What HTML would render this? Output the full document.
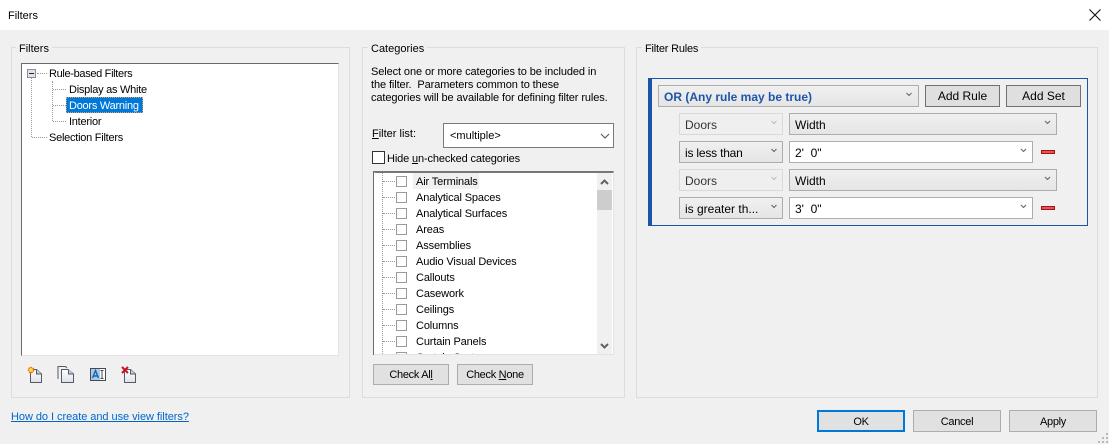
<!DOCTYPE html>
<html><head><meta charset="utf-8"><style>
html,body{margin:0;padding:0}
body{width:1109px;height:444px;position:relative;overflow:hidden;background:#f0f0f0;font:11px/18px "Liberation Sans",sans-serif;color:#000}
div,span.a,svg{position:absolute;box-sizing:border-box}
.t{white-space:nowrap;height:16px}
.g{border:1px solid #dcdcdc}
.l{background:#f0f0f0;padding:0 3px;white-space:nowrap;height:16px}
.b{background:#e1e1e1;border:1px solid #adadad;text-align:center;line-height:20px}
.r{font-size:12px}
.c{background:linear-gradient(#f0f0f0,#e5e5e5);border:1px solid #adadad;line-height:22px;padding-left:5px;white-space:nowrap;font-size:12px}
.w{background:#fff;border:1px solid #adadad;line-height:22px;padding-left:5px;white-space:pre;font-size:12px}
.dis{background:#efefef;border:1px solid #d9d9d9;line-height:22px;padding-left:5px;color:#333;font-size:12px}
.cb{width:11px;height:11px;background:#fff;border:1px solid #9a9a9a}
.dh{height:1px;border-top:1px dotted #999}
.dv{width:1px;border-left:1px dotted #999}
.tr{letter-spacing:-.25px}
.li{letter-spacing:-.13px}
.s{letter-spacing:-.3px;line-height:21px}
u{text-decoration:underline}
.m{width:14px;height:4px;background:#f05050;border:1px solid #a01818}
</style></head><body>
<div style="left:0;top:0;width:1109px;height:30px;background:#fff"></div>
<div class="t" style="left:8px;top:7px">Filters</div>
<svg style="left:1088px;top:8px" width="14" height="14"><path d="M1.500 1.500L12.500 12.500M12.500 1.500L1.500 12.500" stroke="#111" stroke-width="1.100"/></svg>

<div class="g" style="left:11px;top:47px;width:339px;height:351px"></div>
<div class="l" style="left:16px;top:40px">Filters</div>
<div style="left:21px;top:63px;width:318px;height:293px;background:#fff;border:1px solid #e3e3e3;border-top:1px solid #6a6a6a;border-left:1px solid #6a6a6a"></div>
<div style="left:27px;top:69px;width:9px;height:9px;background:#dfe3e8;border:1px solid #8a8f96"></div>
<div style="left:29px;top:73px;width:5px;height:1px;background:#222"></div>
<div class="dh" style="left:37px;top:73px;width:10px"></div>
<div class="dv" style="left:31px;top:78px;height:59px"></div>
<div class="dh" style="left:32px;top:137px;width:15px"></div>
<div class="dv" style="left:52px;top:81px;height:40px"></div>
<div class="dh" style="left:53px;top:89px;width:13px"></div>
<div class="dh" style="left:53px;top:105px;width:13px"></div>
<div class="dh" style="left:53px;top:121px;width:13px"></div>
<div class="t tr" style="left:49px;top:65px;letter-spacing:-.33px">Rule-based Filters</div>
<div class="t tr" style="left:69px;top:81px">Display as White</div>
<div class="t tr" style="left:66px;top:97px;width:77px;background:#0078d7;color:#fff;padding-left:3px;outline:1px dotted #d8a060;outline-offset:-1px">Doors Warning</div>
<div class="t tr" style="left:69px;top:113px">Interior</div>
<div class="t tr" style="left:49px;top:129px">Selection Filters</div>

<svg style="left:26px;top:365px" width="115" height="20">
<defs><linearGradient id="p" x1="0" y1="0" x2="0" y2="1"><stop offset="0" stop-color="#fff"/><stop offset="1" stop-color="#dde1e8"/></linearGradient></defs>
<path d="M4.500 4.500H10.500L15.500 9V17.500H4.500Z" fill="url(#p)" stroke="#555b66"/>
<path d="M10.500 4.500V9H15.500" fill="#c9ced6" stroke="#555b66"/>
<circle cx="5" cy="5" r="2.600" fill="#ffd84a" stroke="#e06a00" stroke-width="1.400" stroke-dasharray="1.500 .8"/>
<path d="M32.500 13.500H32V1.500H39.500L41 3" fill="none" stroke="#555b66"/>
<path d="M35.500 4.500H42L47.500 9V17.500H35.500Z" fill="url(#p)" stroke="#555b66"/>
<path d="M42.500 4.500V9H47.500" fill="#c9ced6" stroke="#555b66"/>
<rect x="64.500" y="3.500" width="15" height="12" fill="#fff" stroke="#454b55"/>
<rect x="65" y="4" width="9" height="11" fill="#a8cce8"/>
<path d="M66.500 13L69.500 5.500L72.500 13M67.500 11H71.500" fill="none" stroke="#1a62b0" stroke-width="1.400"/>
<path d="M74.500 5.500H77.500M76 5.500V13.500M74.500 13.500H77.500" fill="none" stroke="#454b55"/>
<path d="M98.500 4.500H104.500L109.500 9V17.500H98.500Z" fill="url(#p)" stroke="#555b66"/>
<path d="M104.500 4.500V9H109.500" fill="#c9ced6" stroke="#555b66"/>
<path d="M96 2L102 8M102 2L96 8" stroke="#c81020" stroke-width="2"/>
</svg>

<div class="t" style="left:11px;top:408px;color:#0066cc;text-decoration:underline;letter-spacing:-.05px">How do I create and use view filters?</div>

<div class="g" style="left:362px;top:47px;width:263px;height:351px"></div>
<div class="l" style="left:368px;top:40px">Categories</div>
<div class="t li" style="left:371px;top:63px;letter-spacing:-.1px">Select one or more categories to be included in</div>
<div class="t li" style="left:371px;top:76px;letter-spacing:-.1px">the filter.&nbsp; Parameters common to these</div>
<div class="t li" style="left:371px;top:89px;letter-spacing:-.1px">categories will be available for defining filter rules.</div>
<div class="t" style="left:372px;top:125px"><u>F</u>ilter list:</div>
<div style="left:443px;top:123px;width:171px;height:25px;background:#fff;border:1px solid #7a7a7a;line-height:25px;padding-left:6px">&lt;multiple&gt;</div>
<svg style="left:600px;top:133px" width="10" height="7"><path d="M1 1L5 5L9 1" fill="none" stroke="#555" stroke-width="1.100"/></svg>
<div style="left:372px;top:151px;width:13px;height:13px;background:#fff;border:1px solid #333"></div>
<div class="t li" style="left:387px;top:150px">Hide <u>u</u>n-checked categories</div>

<div class="li" style="left:373px;top:171px;width:241px;height:184px;background:#fff;border:1px solid #e3e3e3;border-top:2px solid #777;border-left:2px solid #fff;overflow:hidden">
<div class="dv" style="left:7px;top:0;height:181px"></div>
<div class="dh" style="left:8px;top:8px;width:12px"></div><div class="cb" style="left:21px;top:3px"></div>
<div class="dh" style="left:8px;top:24px;width:12px"></div><div class="cb" style="left:21px;top:19px"></div>
<div class="dh" style="left:8px;top:40px;width:12px"></div><div class="cb" style="left:21px;top:35px"></div>
<div class="dh" style="left:8px;top:56px;width:12px"></div><div class="cb" style="left:21px;top:51px"></div>
<div class="dh" style="left:8px;top:72px;width:12px"></div><div class="cb" style="left:21px;top:67px"></div>
<div class="dh" style="left:8px;top:88px;width:12px"></div><div class="cb" style="left:21px;top:83px"></div>
<div class="dh" style="left:8px;top:104px;width:12px"></div><div class="cb" style="left:21px;top:99px"></div>
<div class="dh" style="left:8px;top:120px;width:12px"></div><div class="cb" style="left:21px;top:115px"></div>
<div class="dh" style="left:8px;top:136px;width:12px"></div><div class="cb" style="left:21px;top:131px"></div>
<div class="dh" style="left:8px;top:152px;width:12px"></div><div class="cb" style="left:21px;top:147px"></div>
<div class="dh" style="left:8px;top:168px;width:12px"></div><div class="cb" style="left:21px;top:163px"></div>
<div class="cb" style="left:21px;top:179px"></div>
<div class="t" style="left:38px;top:0;width:66px;background:#f0f0f0;padding-left:3px">Air Terminals</div>
<div class="t" style="left:41px;top:16px">Analytical Spaces</div>
<div class="t" style="left:41px;top:32px">Analytical Surfaces</div>
<div class="t" style="left:41px;top:48px">Areas</div>
<div class="t" style="left:41px;top:64px">Assemblies</div>
<div class="t" style="left:41px;top:80px">Audio Visual Devices</div>
<div class="t" style="left:41px;top:96px">Callouts</div>
<div class="t" style="left:41px;top:112px">Casework</div>
<div class="t" style="left:41px;top:128px">Ceilings</div>
<div class="t" style="left:41px;top:144px">Columns</div>
<div class="t" style="left:41px;top:160px">Curtain Panels</div>
<div class="t" style="left:41px;top:176px">Curtain Systems</div>
<div style="left:222px;top:0;width:15px;height:181px;background:#f0f0f0"></div>
<div style="left:222px;top:17px;width:15px;height:20px;background:#cdcdcd"></div>
<svg style="left:225px;top:5px" width="10" height="8"><path d="M1 6L4.500 2.500L8 6" fill="none" stroke="#606060" stroke-width="2"/></svg>
<svg style="left:225px;top:169px" width="10" height="8"><path d="M1 2L4.500 5.500L8 2" fill="none" stroke="#606060" stroke-width="2"/></svg>
</div>
<div style="left:373px;top:171px;width:1px;height:184px;background:#6a6a6a"></div>
<div class="b s" style="left:373px;top:364px;width:76px;height:21px">Check Al<u>l</u></div>
<div class="b s" style="left:457px;top:364px;width:76px;height:21px">Check <u>N</u>one</div>

<div class="g" style="left:636px;top:47px;width:462px;height:351px"></div>
<div class="l" style="left:642px;top:40px;letter-spacing:-.2px">Filter Rules</div>
<div style="left:648px;top:78px;width:440px;height:148px;border:1px solid #1a56a8;border-left:4px solid #1a56a8"></div>
<div class="c" style="left:658px;top:85px;width:261px;height:22px;color:#1f55a8;font-weight:bold;padding-left:5px">OR (Any rule may be true)</div>
<div class="b r" style="left:925px;top:85px;width:75px;height:22px;background:#dfdfdf;border-color:#707070">Add Rule</div>
<div class="b r" style="left:1006px;top:85px;width:75px;height:22px;background:#dfdfdf;border-color:#707070">Add Set</div>
<div class="dis" style="left:679px;top:113px;width:104px;height:22px">Doors</div>
<div class="c" style="left:789px;top:113px;width:268px;height:22px">Width</div>
<div class="c" style="left:679px;top:141px;width:104px;height:22px;letter-spacing:-.2px">is less than</div>
<div class="w" style="left:789px;top:141px;width:244px;height:22px">2'  0"</div>
<div class="m" style="left:1041px;top:150px"></div>
<div class="dis" style="left:679px;top:169px;width:104px;height:22px">Doors</div>
<div class="c" style="left:789px;top:169px;width:268px;height:22px">Width</div>
<div class="c" style="left:679px;top:197px;width:104px;height:22px">is greater th...</div>
<div class="w" style="left:789px;top:197px;width:244px;height:22px">3'  0"</div>
<div class="m" style="left:1041px;top:206px"></div>
<svg style="left:0;top:0" width="1109" height="444" fill="none" stroke-width="1.100">
<path d="M906.500 93L909 95.500L911.500 93" stroke="#666"/>
<path d="M771.500 121L774 123.500L776.500 121" stroke="#bbb"/>
<path d="M1045 121L1047.500 123.500L1050 121" stroke="#666"/>
<path d="M771.500 149L774 151.500L776.500 149" stroke="#666"/>
<path d="M1021 149L1023.500 151.500L1026 149" stroke="#666"/>
<path d="M771.500 177L774 179.500L776.500 177" stroke="#bbb"/>
<path d="M1045 177L1047.500 179.500L1050 177" stroke="#666"/>
<path d="M771.500 205L774 207.500L776.500 205" stroke="#666"/>
<path d="M1021 205L1023.500 207.500L1026 205" stroke="#666"/>
</svg>

<div class="b s" style="left:817px;top:410px;width:88px;height:22px;border:2px solid #0078d7;line-height:20px">OK</div>
<div class="b s" style="left:913px;top:410px;width:88px;height:22px;line-height:22px">Cancel</div>
<div class="b s" style="left:1009px;top:410px;width:88px;height:22px;line-height:22px">Apply</div>
<svg style="left:1098px;top:433px" width="11" height="11" fill="#b8b8b8"><rect x="8" y="0" width="2" height="2"/><rect x="4" y="4" width="2" height="2"/><rect x="8" y="4" width="2" height="2"/><rect x="0" y="8" width="2" height="2"/><rect x="4" y="8" width="2" height="2"/><rect x="8" y="8" width="2" height="2"/></svg>
</body></html>
